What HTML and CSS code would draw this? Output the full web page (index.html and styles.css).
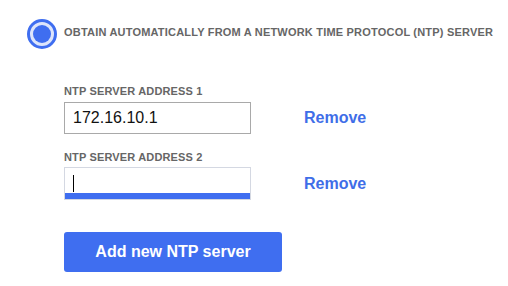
FILE: index.html
```html
<!DOCTYPE html>
<html>
<head>
<meta charset="utf-8">
<link rel="stylesheet" href="styles.css">
</head>
<body>
<div class="option">
  <span class="radio"><span class="dot"></span></span>
  <span class="option-text">OBTAIN AUTOMATICALLY FROM A NETWORK TIME PROTOCOL (NTP) SERVER</span>
</div>
<div class="servers">
  <div class="label first">NTP SERVER ADDRESS 1</div>
  <div class="row">
    <div class="field">172.16.10.1</div>
    <a class="remove">Remove</a>
  </div>
  <div class="label second">NTP SERVER ADDRESS 2</div>
  <div class="row">
    <div class="field focused"><span class="caret"></span></div>
    <a class="remove">Remove</a>
  </div>
  <button class="add">Add new NTP server</button>
</div>
</body>
</html>
```
FILE: styles.css
```css
html, body {
  margin: 0;
  padding: 0;
  background: #ffffff;
}
body {
  font-family: "Liberation Sans", Arial, sans-serif;
  width: 508px;
  height: 286px;
  overflow: hidden;
}
.option {
  display: flex;
  align-items: flex-start;
  gap: 7px;
  padding-left: 27px;
  margin-top: 19px;
}
.radio {
  box-sizing: border-box;
  width: 30px;
  height: 30px;
  border-radius: 50%;
  border: 3px solid #3f6ef0;
  background: #dde5fb;
  display: flex;
  align-items: center;
  justify-content: center;
  flex: none;
}
.dot {
  width: 18px;
  height: 18px;
  border-radius: 50%;
  background: #3f6ef0;
}
.option-text {
  margin-top: 7px;
  font-size: 11px;
  line-height: 12px;
  font-weight: bold;
  color: #666666;
  letter-spacing: 0.2px;
  white-space: nowrap;
}
.servers {
  padding-left: 64px;
  display: flex;
  flex-direction: column;
  align-items: flex-start;
}
.label {
  font-size: 11px;
  line-height: 13px;
  font-weight: bold;
  color: #666666;
  letter-spacing: 0.15px;
}
.label.first {
  margin-top: 36px;
  margin-bottom: 4px;
}
.label.second {
  margin-top: 17px;
  margin-bottom: 3px;
}
.row {
  display: flex;
  align-items: center;
  gap: 53px;
}
.field {
  box-sizing: border-box;
  width: 187px;
  height: 32px;
  border: 1px solid #a9a9a9;
  padding-left: 8px;
  font-size: 16px;
  line-height: 30px;
  color: #111111;
  display: flex;
  align-items: center;
}
.field.focused {
  height: 33px;
  border-color: #d4d8e2;
  box-shadow: inset 0 -6px 0 #3f6ef0;
  align-items: flex-start;
}
.caret {
  display: block;
  width: 1px;
  height: 17px;
  margin-top: 7px;
  background: #000000;
}
.remove {
  font-size: 16px;
  font-weight: bold;
  color: #3f6ee8;
  cursor: pointer;
}
.add {
  margin-top: 32px;
  width: 218px;
  height: 40px;
  border: none;
  border-radius: 3px;
  background: #3f6ef0;
  color: #ffffff;
  font-family: "Liberation Sans", Arial, sans-serif;
  font-size: 16px;
  font-weight: bold;
  padding: 0;
  cursor: pointer;
}
```
